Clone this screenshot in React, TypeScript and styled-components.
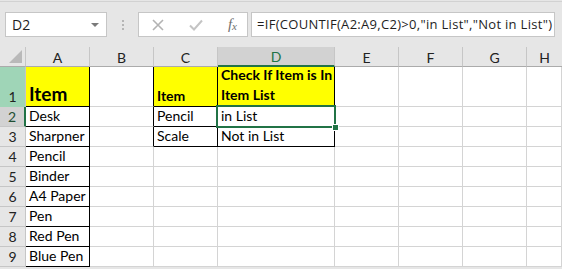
import styled, { createGlobalStyle } from 'styled-components'

const GlobalStyle = createGlobalStyle`
  html, body {
    margin: 0;
    padding: 0;
    background: #ffffff;
  }
  body {
    width: 562px;
    height: 269px;
    overflow: hidden;
  }
`

const CELL_FONT = `Lato, "Open Sans", sans-serif`
const GRID = '#d4d4d4'
const INK = '#000000'
const GREEN = '#217346'
const YELLOW = '#ffff00'

const COLUMNS = ['A', 'B', 'C', 'D', 'E', 'F', 'G', 'H']
const COLUMN_WIDTHS = [64, 64, 64, 117, 64, 64, 64]

type CellSpec = {
  text?: string
  bg?: string
  bold?: boolean
  size?: number
  right?: string
  bottom?: string
  wrap?: boolean
  selected?: boolean
}

const items = ['Item', 'Desk', 'Sharpner', 'Pencil', 'Binder', 'A4 Paper', 'Pen', 'Red Pen', 'Blue Pen']

function buildRow(r: number): CellSpec[] {
  const a: CellSpec = {
    text: items[r],
    bg: r === 0 ? YELLOW : undefined,
    bold: r === 0,
    size: r === 0 ? 19 : undefined,
    right: INK,
    bottom: INK,
  }
  const inTable = r <= 2
  const b: CellSpec = { right: inTable ? INK : undefined }
  const cTexts = ['Item', 'Pencil', 'Scale']
  const dTexts = ['Check If Item is In Item List', 'in List', 'Not in List']
  const c: CellSpec = inTable
    ? { text: cTexts[r], bg: r === 0 ? YELLOW : undefined, bold: r === 0, right: INK, bottom: INK }
    : {}
  const d: CellSpec = inTable
    ? {
        text: dTexts[r],
        bg: r === 0 ? YELLOW : undefined,
        bold: r === 0,
        wrap: r === 0,
        right: INK,
        bottom: INK,
        selected: r === 1,
      }
    : {}
  return [a, b, c, d, {}, {}, {}, {}]
}

function App() {
  return (
    <Window>
      <GlobalStyle />
      <Toolbar>
        <NameBox>
          <NameText>D2</NameText>
          <DropArrow />
        </NameBox>
        <Grip>
          <span />
          <span />
          <span />
        </Grip>
        <IconBox>
          <svg width="14" height="14" viewBox="0 0 14 14">
            <path d="M2 2 L12 12 M12 2 L2 12" stroke="#b3b3b3" strokeWidth="1.6" fill="none" />
          </svg>
          <svg width="16" height="14" viewBox="0 0 16 14">
            <path d="M2 7.5 L6 11.5 L14 2.5" stroke="#c4c4c4" strokeWidth="2" fill="none" />
          </svg>
          <Fx>
            f<sub>x</sub>
          </Fx>
        </IconBox>
        <FormulaBar>=IF(COUNTIF(A2:A9,C2)&gt;0,"in List","Not in List")</FormulaBar>
      </Toolbar>
      <Sheet>
        <Corner>
          <svg width="13" height="13" viewBox="0 0 13 13">
            <path d="M13 0 L13 13 L0 13 Z" fill="#b9b9b9" />
          </svg>
        </Corner>
        {COLUMNS.map((col, i) => (
          <ColHeader key={col} $active={col === 'D'} $last={i === COLUMNS.length - 1}>
            {col}
          </ColHeader>
        ))}
        {Array.from({ length: 9 }, (_, r) => {
          const row = buildRow(r)
          const tint = r === 0 ? 'mint' : r === 1 ? 'active' : 'plain'
          return [
            <RowHeader key={`h${r}`} $tint={tint}>
              {r + 1}
            </RowHeader>,
            ...row.map((cell, c) => (
              <Cell
                key={`${r}-${c}`}
                $bg={cell.bg}
                $bold={cell.bold}
                $size={cell.size}
                $right={cell.right}
                $bottom={cell.bottom}
              >
                {cell.wrap ? <Wrapped>{cell.text}</Wrapped> : cell.text}
                {cell.selected && (
                  <Selection>
                    <FillHandle />
                  </Selection>
                )}
              </Cell>
            )),
          ]
        })}
      </Sheet>
    </Window>
  )
}

const Window = styled.div`
  width: 562px;
  height: 269px;
  overflow: hidden;
  background: #e6e6e6;
  display: flex;
  flex-direction: column;
`

const Toolbar = styled.div`
  height: 46px;
  box-sizing: border-box;
  border-top: 1px solid #d2d2d2;
  margin-top: 1px;
  padding: 10px 0 0 5px;
  display: flex;
  align-items: flex-start;
  background: #e6e6e6;
`

const NameBox = styled.div`
  width: 102px;
  height: 25px;
  box-sizing: border-box;
  border: 1px solid #c6c6c6;
  background: #ffffff;
  display: flex;
  align-items: center;
  justify-content: space-between;
  padding: 0 7px 0 6px;
`

const NameText = styled.span`
  font-family: "Open Sans", sans-serif;
  font-size: 14px;
  color: #1e1e1e;
`

const DropArrow = styled.span`
  width: 0;
  height: 0;
  border-left: 4px solid transparent;
  border-right: 4px solid transparent;
  border-top: 4px solid #7a7a7a;
  margin-top: 1px;
`

const Grip = styled.div`
  width: 31px;
  height: 25px;
  display: flex;
  flex-direction: column;
  align-items: center;
  justify-content: center;
  gap: 2px;

  span {
    width: 2px;
    height: 2px;
    background: #b5b5b5;
  }
`

const IconBox = styled.div`
  width: 110px;
  height: 25px;
  box-sizing: border-box;
  border: 1px solid #c6c6c6;
  background: #ffffff;
  display: flex;
  align-items: center;
  justify-content: space-between;
  padding: 0 10px 0 12px;
`

const Fx = styled.span`
  font-family: "Liberation Serif", serif;
  font-style: italic;
  font-size: 15px;
  color: #6f6f6f;
  line-height: 1;

  sub {
    font-size: 11px;
    vertical-align: -1px;
  }
`

const FormulaBar = styled.div`
  margin-left: 3px;
  width: 304px;
  height: 25px;
  box-sizing: border-box;
  border: 1px solid #c6c6c6;
  background: #ffffff;
  padding: 0 0 0 5px;
  font-family: "Open Sans", sans-serif;
  font-size: 13px;
  letter-spacing: 0.3px;
  line-height: 23px;
  color: #1e1e1e;
  white-space: nowrap;
  overflow: hidden;
`

const Sheet = styled.div`
  display: grid;
  grid-template-columns: 26px ${COLUMN_WIDTHS.map((w) => `${w}px`).join(' ')} 1fr;
  grid-template-rows: 20px 40px repeat(8, 20px);
  background: #ffffff;
`

const Corner = styled.div`
  background: #e6e6e6;
  box-sizing: border-box;
  border-right: 1px solid #c6c6c6;
  border-bottom: 1px solid #ababab;
  display: flex;
  align-items: flex-end;
  justify-content: flex-end;
  padding: 0 3px 3px 0;
`

const ColHeader = styled.div<{ $active: boolean; $last: boolean }>`
  background: ${({ $active }) => ($active ? '#d2d2d2' : '#e6e6e6')};
  color: ${({ $active }) => ($active ? GREEN : '#222222')};
  box-sizing: border-box;
  border-right: ${({ $last }) => ($last ? '0' : '1px solid #c6c6c6')};
  border-bottom: ${({ $active }) => ($active ? `2px solid ${GREEN}` : '1px solid #ababab')};
  font-family: ${CELL_FONT};
  font-size: 14px;
  display: flex;
  align-items: center;
  justify-content: center;
  padding-top: 1px;
`

const rowHeaderBg = {
  plain: '#e6e6e6',
  mint: '#9fd5b7',
  active: '#d2d2d2',
}

const RowHeader = styled.div<{ $tint: 'plain' | 'mint' | 'active' }>`
  background: ${({ $tint }) => rowHeaderBg[$tint]};
  color: ${({ $tint }) => ($tint === 'active' ? '#1f4f33' : '#222222')};
  box-sizing: border-box;
  border-right: ${({ $tint }) => ($tint === 'active' ? `2px solid ${GREEN}` : '1px solid #c6c6c6')};
  border-bottom: 1px solid ${({ $tint }) => ($tint === 'mint' ? '#9fd5b7' : '#c6c6c6')};
  font-family: ${CELL_FONT};
  font-size: 14px;
  display: flex;
  align-items: flex-end;
  justify-content: center;
  padding-bottom: 1px;
`

const Cell = styled.div<{
  $bg?: string
  $bold?: boolean
  $size?: number
  $right?: string
  $bottom?: string
}>`
  position: relative;
  background: ${({ $bg }) => $bg ?? '#ffffff'};
  box-sizing: border-box;
  border-right: 1px solid ${({ $right }) => $right ?? GRID};
  border-bottom: 1px solid ${({ $bottom }) => $bottom ?? GRID};
  font-family: ${CELL_FONT};
  font-size: ${({ $size }) => $size ?? 14}px;
  font-weight: ${({ $bold }) => ($bold ? 700 : 400)};
  color: #000000;
  white-space: nowrap;
  display: flex;
  align-items: flex-end;
  padding: 0 0 1px 3px;
  line-height: ${({ $size }) => ($size ? 22 : 18)}px;
`

const Wrapped = styled.span`
  white-space: normal;
  line-height: 20px;
`

const Selection = styled.div`
  position: absolute;
  z-index: 2;
  left: -2px;
  top: -2px;
  right: -2px;
  bottom: -2px;
  border: 2px solid ${GREEN};
  pointer-events: none;
`

const FillHandle = styled.div`
  position: absolute;
  right: -5px;
  bottom: -5px;
  width: 5px;
  height: 5px;
  background: ${GREEN};
  border: 1px solid #ffffff;
`

export default App
